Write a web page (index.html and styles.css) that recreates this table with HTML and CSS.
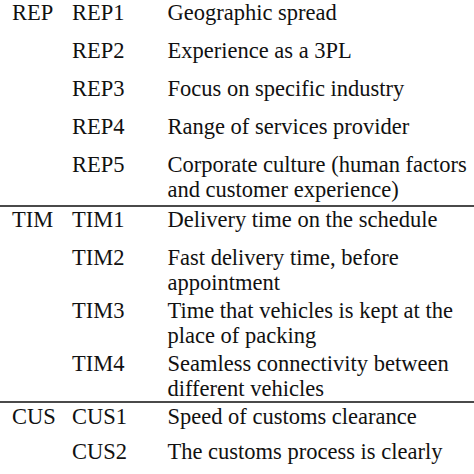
FILE: index.html
```html
<!DOCTYPE html>
<html>
<head>
<meta charset="utf-8">
<link rel="stylesheet" href="styles.css">
</head>
<body>
<div class="tbl">
  <div class="grp">
    <div class="ln"><p class="cl">REP</p><p class="cl">REP1</p><p class="cl">Geographic spread</p></div>
    <div class="ln"><p class="cl"></p><p class="cl">REP2</p><p class="cl">Experience as a 3PL</p></div>
    <div class="ln"><p class="cl"></p><p class="cl">REP3</p><p class="cl">Focus on specific industry</p></div>
    <div class="ln"><p class="cl"></p><p class="cl">REP4</p><p class="cl">Range of services provider</p></div>
    <div class="ln two"><p class="cl"></p><p class="cl">REP5</p><p class="cl">Corporate culture (human factors<br>and customer experience)</p></div>
  </div>
  <div class="grp ruled">
    <div class="ln"><p class="cl">TIM</p><p class="cl">TIM1</p><p class="cl">Delivery time on the schedule</p></div>
    <div class="ln two"><p class="cl"></p><p class="cl">TIM2</p><p class="cl">Fast delivery time, before<br>appointment</p></div>
    <div class="ln two"><p class="cl"></p><p class="cl">TIM3</p><p class="cl">Time that vehicles is kept at the<br>place of packing</p></div>
    <div class="ln two end"><p class="cl"></p><p class="cl">TIM4</p><p class="cl">Seamless connectivity between<br>different vehicles</p></div>
  </div>
  <div class="grp ruled cus">
    <div class="ln tight"><p class="cl">CUS</p><p class="cl">CUS1</p><p class="cl">Speed of customs clearance</p></div>
    <div class="ln"><p class="cl"></p><p class="cl">CUS2</p><p class="cl">The customs process is clearly</p></div>
  </div>
</div>
</body>
</html>
```
FILE: styles.css
```css
body {
  margin: 0;
  font-family: "Times New Roman", "Liberation Serif", Tinos, serif;
}
.tbl {
  width: 474px;
  overflow: hidden;
  color: #111;
}
.cl {
  margin: 0;
  font-family: "Times New Roman", "Liberation Serif", Tinos, serif;
  font-size: 22.5px;
  line-height: 25px;
  white-space: nowrap;
}
.grp.ruled {
  border-top: 2px solid #4a4a4a;
}
.grp.cus {
  padding-top: 1px;
}
.ln {
  display: grid;
  grid-template-columns: 60px 95.5px 1fr;
  padding-left: 12px;
  padding-bottom: 13px;
}
.ln.two {
  padding-bottom: 3px;
}
.ln.two.end {
  padding-bottom: 0;
}
.ln.tight {
  padding-bottom: 10px;
}
```
